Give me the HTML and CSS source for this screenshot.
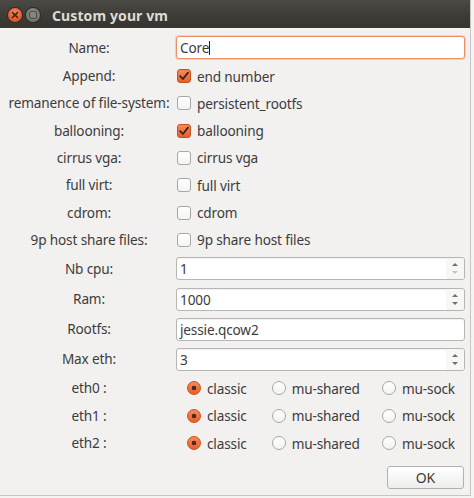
FILE: index.html
```html
<!DOCTYPE html>
<html>
<head>
<meta charset="utf-8">
<link rel="stylesheet" href="styles.css">
</head>
<body>
<div class="window">
  <div class="titlebar">
    <span class="wbtn close"><svg width="14" height="14" viewBox="0 0 14 14"><path d="M4.6 4.6 L9.4 9.4 M9.4 4.6 L4.6 9.4" stroke="#3a2a22" stroke-width="1.6" stroke-linecap="round"/></svg></span>
    <span class="wbtn maxi"><span class="inner"></span></span>
    <span class="title">Custom your vm</span>
  </div>
  <div class="content">
    <div class="form">
      <div class="label">Name:</div>
      <div class="field"><div class="entry focus"><span>Core</span><span class="caret"></span></div></div>

      <div class="label">Append:</div>
      <div class="field"><span class="check on"><svg width="14" height="14" viewBox="0 0 14 14"><path d="M3.2 7.2 L5.9 10 L11 3.6" fill="none" stroke="#3b2418" stroke-width="1.8" stroke-linecap="round" stroke-linejoin="round"/></svg></span><span class="opt">end number</span></div>

      <div class="label">remanence of file-system:</div>
      <div class="field"><span class="check"></span><span class="opt">persistent_rootfs</span></div>

      <div class="label">ballooning:</div>
      <div class="field"><span class="check on"><svg width="14" height="14" viewBox="0 0 14 14"><path d="M3.2 7.2 L5.9 10 L11 3.6" fill="none" stroke="#3b2418" stroke-width="1.8" stroke-linecap="round" stroke-linejoin="round"/></svg></span><span class="opt">ballooning</span></div>

      <div class="label">cirrus vga:</div>
      <div class="field"><span class="check"></span><span class="opt">cirrus vga</span></div>

      <div class="label">full virt:</div>
      <div class="field"><span class="check"></span><span class="opt">full virt</span></div>

      <div class="label">cdrom:</div>
      <div class="field"><span class="check"></span><span class="opt">cdrom</span></div>

      <div class="label">9p host share files:</div>
      <div class="field"><span class="check"></span><span class="opt">9p share host files</span></div>

      <div class="label">Nb cpu:</div>
      <div class="field"><div class="entry spin"><span class="val">1</span><span class="arrows"><span class="up"></span><span class="down dim"></span></span></div></div>

      <div class="label">Ram:</div>
      <div class="field"><div class="entry spin"><span class="val">1000</span><span class="arrows"><span class="up"></span><span class="down"></span></span></div></div>

      <div class="label">Rootfs:</div>
      <div class="field"><div class="entry"><span>jessie.qcow2</span></div></div>

      <div class="label">Max eth:</div>
      <div class="field"><div class="entry spin"><span class="val">3</span><span class="arrows"><span class="up"></span><span class="down"></span></span></div></div>

      <div class="label">eth0 :</div>
      <div class="field radios">
        <span class="ropt"><span class="radio on"></span>classic</span>
        <span class="ropt"><span class="radio"></span>mu-shared</span>
        <span class="ropt"><span class="radio"></span>mu-sock</span>
      </div>

      <div class="label">eth1 :</div>
      <div class="field radios">
        <span class="ropt"><span class="radio on"></span>classic</span>
        <span class="ropt"><span class="radio"></span>mu-shared</span>
        <span class="ropt"><span class="radio"></span>mu-sock</span>
      </div>

      <div class="label">eth2 :</div>
      <div class="field radios">
        <span class="ropt"><span class="radio on"></span>classic</span>
        <span class="ropt"><span class="radio"></span>mu-shared</span>
        <span class="ropt"><span class="radio"></span>mu-sock</span>
      </div>
    </div>
    <div class="actions">
      <button class="ok">OK</button>
    </div>
  </div>
</div>
</body>
</html>
```

FILE: styles.css
```css
* { box-sizing: border-box; }
html, body { margin: 0; padding: 0; }
body {
  background: #f4f4f3;
  width: 474px;
  height: 498px;
  overflow: hidden;
  font-family: "Noto Sans", "DejaVu Sans", sans-serif;
  font-size: 13.6px;
  letter-spacing: -0.15px;
  color: #3c3c3c;
}
.window {
  width: 471px;
  height: 496px;
  background: #f2f1f0;
  border-right: 1px solid #c9c6c1;
  border-bottom: 1px solid #c9c6c1;
  display: flex;
  flex-direction: column;
}
.titlebar {
  height: 28px;
  flex: none;
  background: linear-gradient(#4a4944, #3c3b37 60%, #36352f);
  display: flex;
  align-items: center;
  padding-left: 8px;
  padding-top: 2px;
}
.wbtn {
  width: 14px;
  height: 14px;
  border-radius: 50%;
  display: flex;
  align-items: center;
  justify-content: center;
  margin-right: 4px;
}
.wbtn.close {
  background: radial-gradient(circle at 50% 35%, #f68a5c, #e5531f 70%, #c9461a);
  box-shadow: 0 0 0 1px #2d2c29;
}
.wbtn.maxi {
  background: radial-gradient(circle at 50% 35%, #8c8b86, #6f6e69);
  box-shadow: 0 0 0 1px #2d2c29;
}
.wbtn.maxi .inner {
  width: 8px;
  height: 8px;
  border-radius: 2px;
  border: 1.5px solid #4d4c48;
}
.title {
  margin-left: 8px;
  font-weight: bold;
  font-size: 14px;
  color: #dfdbd2;
  letter-spacing: 0.1px;
}
.content {
  flex: 1;
  padding: 4px 6px 0 7px;
  border-top: 1px solid #f7f6f5;
}
.form {
  display: grid;
  grid-template-columns: 164px 289px;
  column-gap: 5px;
  grid-template-rows: 29.4px repeat(7, 27.3px) 31px 30px 30px 30px repeat(3, 27.5px);
}
.label {
  display: flex;
  align-items: center;
  justify-content: center;
  white-space: nowrap;
  padding-bottom: 1px;
}
.field {
  display: flex;
  align-items: center;
}
.entry {
  width: 289px;
  height: 23px;
  background: #fff;
  border: 1px solid #b8b6b2;
  border-radius: 3px;
  display: flex;
  align-items: center;
  padding-left: 3px;
  box-shadow: inset 0 1px 1px rgba(0,0,0,0.06);
}
.entry.focus {
  border-color: #ec8f66;
  box-shadow: 0 0 0 1px rgba(240,150,110,0.35);
}
.caret {
  display: inline-block;
  width: 1px;
  height: 14px;
  background: #222;
}
.spin { padding-right: 0; }
.spin .val { flex: 1; }
.arrows {
  width: 18px;
  height: 100%;
  display: flex;
  flex-direction: column;
  align-items: center;
  justify-content: center;
  gap: 5px;
  background: #f7f7f6;
  border-radius: 0 2px 2px 0;
}
.arrows .up {
  width: 0; height: 0;
  border-left: 3px solid transparent;
  border-right: 3px solid transparent;
  border-bottom: 3px solid #6f6f6f;
}
.arrows .down {
  width: 0; height: 0;
  border-left: 3px solid transparent;
  border-right: 3px solid transparent;
  border-top: 3px solid #6f6f6f;
}
.arrows .down.dim { border-top-color: #c2c2c2; }
.check {
  width: 14px;
  height: 14px;
  margin-left: 1px;
  border: 1px solid #a9a7a3;
  border-radius: 3px;
  background: linear-gradient(#ffffff, #f4f4f4);
  flex: none;
  display: flex;
  align-items: center;
  justify-content: center;
}
.check svg { display: block; margin: -1px; }
.check.on {
  border-color: #c4511f;
  background: linear-gradient(#f5895a, #e8602c);
}
.opt { margin-left: 6px; white-space: nowrap; }
.radios {
  display: grid;
  grid-template-columns: 84.7px 110.3px auto;
  padding-left: 11px;
}
.ropt {
  display: flex;
  align-items: center;
  white-space: nowrap;
}
.radio {
  width: 14px;
  height: 14px;
  border-radius: 50%;
  border: 1px solid #aaa8a4;
  background: linear-gradient(#ffffff, #f3f3f3);
  margin-right: 6px;
  flex: none;
}
.radio.on {
  border-color: #c4511f;
  background: radial-gradient(circle, #4a2a1c 0 2px, transparent 2.6px), linear-gradient(#f5895a, #e8602c);
}
.actions {
  display: flex;
  justify-content: flex-end;
  margin-top: 9px;
}
.ok {
  width: 77px;
  height: 23px;
  border: 1px solid #b3b1ad;
  border-radius: 3px;
  background: linear-gradient(#ffffff, #ededec);
  font-family: inherit;
  font-size: 14px;
  color: #3c3c3c;
  padding: 0;
}
```
